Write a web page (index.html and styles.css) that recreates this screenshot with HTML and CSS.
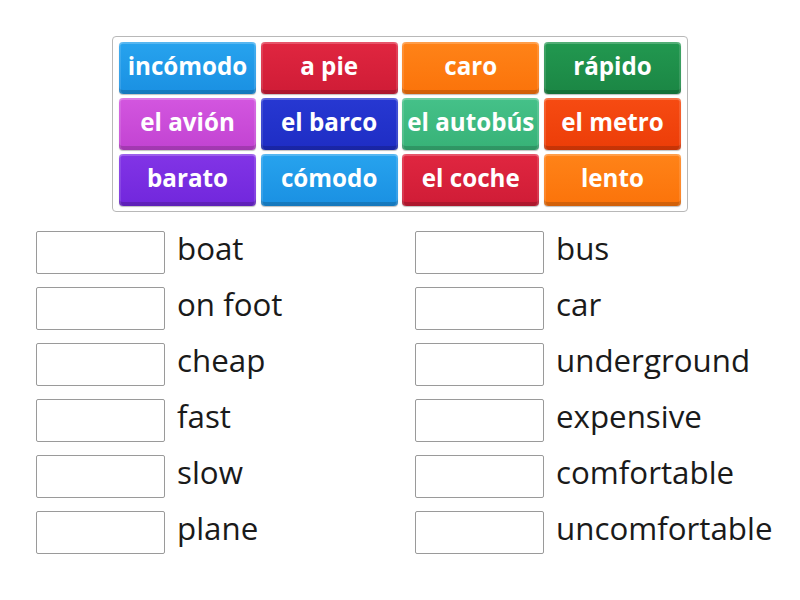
FILE: index.html
```html
<!DOCTYPE html>
<html>
<head>
<meta charset="utf-8">
<link rel="stylesheet" href="styles.css">
</head>
<body>
<div class="page">
  <div class="bank">
    <div class="tile c-blue">incómodo</div>
    <div class="tile c-red">a pie</div>
    <div class="tile c-orange">caro</div>
    <div class="tile c-green">rápido</div>
    <div class="tile c-pink">el avión</div>
    <div class="tile c-navy">el barco</div>
    <div class="tile c-mint">el autobús</div>
    <div class="tile c-vermil">el metro</div>
    <div class="tile c-purple">barato</div>
    <div class="tile c-blue">cómodo</div>
    <div class="tile c-red">el coche</div>
    <div class="tile c-orange">lento</div>
  </div>
  <div class="answers">
    <div class="item"><div class="slot"></div><span class="word">boat</span></div>
    <div class="item"><div class="slot"></div><span class="word">bus</span></div>
    <div class="item"><div class="slot"></div><span class="word">on foot</span></div>
    <div class="item"><div class="slot"></div><span class="word">car</span></div>
    <div class="item"><div class="slot"></div><span class="word">cheap</span></div>
    <div class="item"><div class="slot"></div><span class="word">underground</span></div>
    <div class="item"><div class="slot"></div><span class="word">fast</span></div>
    <div class="item"><div class="slot"></div><span class="word">expensive</span></div>
    <div class="item"><div class="slot"></div><span class="word">slow</span></div>
    <div class="item"><div class="slot"></div><span class="word">comfortable</span></div>
    <div class="item"><div class="slot"></div><span class="word">plane</span></div>
    <div class="item"><div class="slot"></div><span class="word">uncomfortable</span></div>
  </div>
</div>
</body>
</html>
```
FILE: styles.css
```css
html, body {
  margin: 0;
  padding: 0;
  background: #ffffff;
}
body {
  font-family: "Open Sans", "Liberation Sans", sans-serif;
  width: 800px;
  height: 600px;
  overflow: hidden;
}
.page {
  padding-top: 36px;
}
.bank {
  margin-left: 112px;
  width: 562px;
  padding: 5px 6px;
  border: 1px solid #b8b8b8;
  border-radius: 4px;
  display: grid;
  grid-template-columns: repeat(4, 137px);
  grid-auto-rows: 52px;
  column-gap: 4.67px;
  row-gap: 4px;
}
.tile {
  border-radius: 4px;
  color: #ffffff;
  font-weight: 700;
  font-size: 24.2px;
  display: flex;
  align-items: center;
  justify-content: center;
  white-space: nowrap;
  box-shadow:
    inset 0 2px 0 rgba(255,255,255,0.22),
    inset 2px 0 0 rgba(255,255,255,0.12),
    inset -2px 0 0 rgba(255,255,255,0.12),
    inset 0 -4px 0 rgba(0,0,0,0.16),
    0 1px 1px rgba(0,0,0,0.25);
  padding-bottom: 6px;
  box-sizing: border-box;
}
.c-blue   { background: linear-gradient(#27a3ee, #1a90e2); }
.c-red    { background: linear-gradient(#e02640, #cf1c36); }
.c-orange { background: linear-gradient(#ff8318, #fb730a); }
.c-green  { background: linear-gradient(#229850, #1b8644); }
.c-pink   { background: linear-gradient(#d356df, #c243d2); }
.c-navy   { background: linear-gradient(#2738d2, #1e2dc4); }
.c-mint   { background: linear-gradient(#45c189, #37b277); }
.c-vermil { background: linear-gradient(#f64b12, #ec3d08); }
.c-purple { background: linear-gradient(#8234e6, #7127dc); }

.answers {
  margin-top: 19px;
  margin-left: 36px;
  display: grid;
  grid-template-columns: 379px 379px;
  grid-auto-rows: 43px;
  row-gap: 13px;
}
.item {
  display: flex;
  align-items: center;
}
.slot {
  width: 129px;
  height: 43px;
  box-sizing: border-box;
  border: 1px solid #9a9a9a;
  border-radius: 2px;
  background: #ffffff;
  flex: none;
}
.word {
  margin-left: 12px;
  font-size: 31.3px;
  color: #1a1a1a;
  white-space: nowrap;
  padding-bottom: 10px;
}
```
